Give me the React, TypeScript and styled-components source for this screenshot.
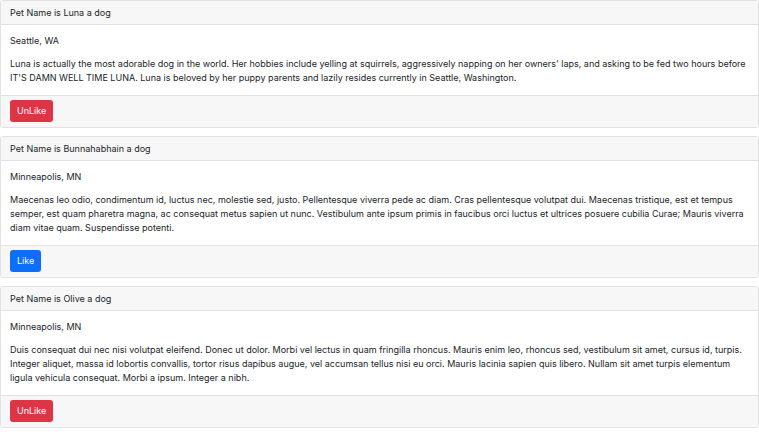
import styled, { createGlobalStyle } from 'styled-components';

const pets = [
    {
        name: 'Luna',
        city: 'Seattle, WA',
        liked: true,
        text: "Luna is actually the most adorable dog in the world. Her hobbies include yelling at squirrels, aggressively napping on her owners' laps, and asking to be fed two hours before IT'S DAMN WELL TIME LUNA. Luna is beloved by her puppy parents and lazily resides currently in Seattle, Washington.",
    },
    {
        name: 'Bunnahabhain',
        city: 'Minneapolis, MN',
        liked: false,
        text: 'Maecenas leo odio, condimentum id, luctus nec, molestie sed, justo. Pellentesque viverra pede ac diam. Cras pellentesque volutpat dui. Maecenas tristique, est et tempus semper, est quam pharetra magna, ac consequat metus sapien ut nunc. Vestibulum ante ipsum primis in faucibus orci luctus et ultrices posuere cubilia Curae; Mauris viverra diam vitae quam. Suspendisse potenti.',
    },
    {
        name: 'Olive',
        city: 'Minneapolis, MN',
        liked: true,
        text: 'Duis consequat dui nec nisi volutpat eleifend. Donec ut dolor. Morbi vel lectus in quam fringilla rhoncus. Mauris enim leo, rhoncus sed, vestibulum sit amet, cursus id, turpis. Integer aliquet, massa id lobortis convallis, tortor risus dapibus augue, vel accumsan tellus nisi eu orci. Mauris lacinia sapien quis libero. Nullam sit amet turpis elementum ligula vehicula consequat. Morbi a ipsum. Integer a nibh.',
    },
];

export default function App() {
    return (
        <>
            <GlobalStyle />
            <List>
                {pets.map(pet => (
                    <Card key={pet.name}>
                        <CardHeader>Pet Name is {pet.name} a dog</CardHeader>
                        <CardBody>
                            <City>{pet.city}</City>
                            <Description>{pet.text}</Description>
                        </CardBody>
                        <CardFooter>
                            <LikeButton $liked={pet.liked}>{pet.liked ? 'UnLike' : 'Like'}</LikeButton>
                        </CardFooter>
                    </Card>
                ))}
            </List>
        </>
    );
}

// Styled Components

const GlobalStyle = createGlobalStyle`
    body {
        margin: 0;
        background: #fff;
        font-family: Inter, "Liberation Sans", sans-serif;
        font-size: 9px;
        line-height: 14px;
        color: #212529;
    }
`;

const List = styled.div`
    display: flex;
    flex-direction: column;
    gap: 8px;
`;

const Card = styled.div`
    border: 1px solid #e2e2e2;
    border-radius: 3px;
    overflow: hidden;
`;

const CardHeader = styled.div`
    background: #f7f7f7;
    border-bottom: 1px solid #e2e2e2;
    padding: 5px 9px 4px;
`;

const CardBody = styled.div`
    padding: 9px 9px 10px;
    display: flex;
    flex-direction: column;
    gap: 9px;
`;

const City = styled.p`
    margin: 0;
`;

const Description = styled.p`
    margin: 0;
`;

const CardFooter = styled.div`
    background: #f7f7f7;
    border-top: 1px solid #e2e2e2;
    padding: 4px 9px 5px;
`;

const LikeButton = styled.button<{ $liked: boolean }>`
    font-family: inherit;
    font-size: 9px;
    line-height: 14px;
    height: 22px;
    padding: 0 7px;
    border: none;
    border-radius: 3px;
    color: #fff;
    background: ${props => (props.$liked ? '#dc3545' : '#0d6efd')};
`;
